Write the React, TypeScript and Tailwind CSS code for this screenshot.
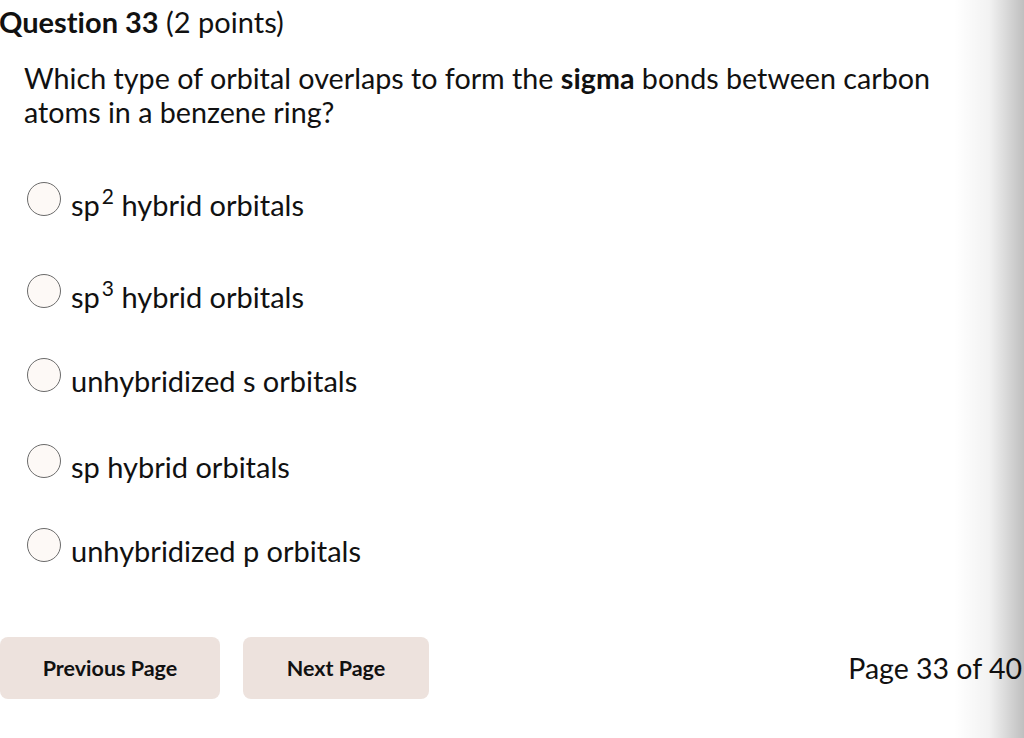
import * as React from 'react';

const options: { id: string; label: React.ReactNode; gap: string }[] = [
  { id: 'a', label: <>sp<sup className="text-[21px] leading-none -top-[0.55em] ml-[2px]">2</sup> hybrid orbitals</>, gap: 'mt-[59px]' },
  { id: 'b', label: <>sp<sup className="text-[21px] leading-none -top-[0.55em] ml-[2px]">3</sup> hybrid orbitals</>, gap: 'mt-[58px]' },
  { id: 'c', label: <>unhybridized s orbitals</>, gap: 'mt-[50px]' },
  { id: 'd', label: <>sp hybrid orbitals</>, gap: 'mt-[52px]' },
  { id: 'e', label: <>unhybridized p orbitals</>, gap: 'mt-[50px]' },
];

const Radio: React.FC = () => (
  <span className="w-[34px] h-[34px] rounded-full border-[1.5px] border-[#6b6b6b] bg-[#fdf9f6] shrink-0 -translate-y-[6px]"></span>
);

export default function App() {
  const [selected, setSelected] = React.useState<string | null>(null);

  return (
    <div className="relative w-[1024px] h-[738px] overflow-hidden bg-white text-[#111] font-['Lato','Liberation_Sans',sans-serif] [font-variant-ligatures:none]">
      <div className="pt-[5px]">
        <h2 className="text-[29px] leading-[34px] -ml-[1px]">
          <span className="font-bold">Question 33</span> (2 points)
        </h2>

        <p className="mt-[22px] pl-[24px] text-[28.7px] leading-[34px] w-[960px]">
          Which type of orbital overlaps to form the <span className="font-bold">sigma</span> bonds between carbon atoms in a benzene ring?
        </p>

        <div className="flex flex-col pl-[27px]">
          {options.map((o) => (
            <label key={o.id} className={`flex items-center gap-[10px] cursor-pointer ${o.gap}`} onClick={() => setSelected(o.id)}>
              <Radio />
              <span className="text-[29px] leading-[34px]">{o.label}</span>
              {selected === o.id && <span className="sr-only">selected</span>}
            </label>
          ))}
        </div>

        <div className="mt-[69px] flex items-center">
          <button className="w-[220px] h-[62px] rounded-[8px] bg-[#ede2dd] text-[21.5px] font-bold">Previous Page</button>
          <button className="ml-[23px] w-[186px] h-[62px] rounded-[8px] bg-[#ede2dd] text-[21.5px] font-bold">Next Page</button>
          <span className="ml-auto mr-[2px] text-[28.5px]">Page 33 of 40</span>
        </div>
      </div>

      <div className="pointer-events-none absolute top-0 right-0 h-full w-[70px] bg-gradient-to-r from-transparent via-black/5 to-black/25"></div>
    </div>
  );
}
